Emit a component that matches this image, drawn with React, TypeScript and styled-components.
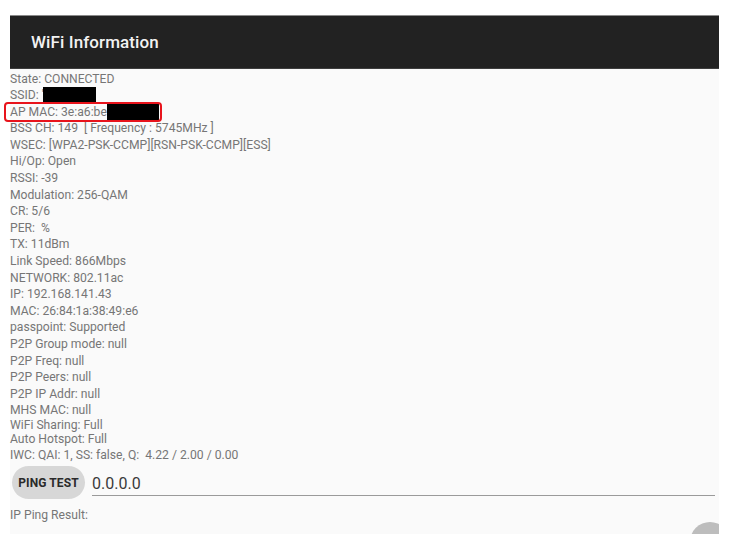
import React from "react";
import styled, { createGlobalStyle } from "styled-components";

const GlobalStyle = createGlobalStyle`
  html, body { margin: 0; padding: 0; background: #ffffff; }
  body { font-family: Roboto, "Noto Sans", "Liberation Sans", sans-serif; }
`;

const Page = styled.div`
  padding: 15px 24px 18px 10px;
  width: 743px;
  height: 552px;
  box-sizing: border-box;
`;

const Screen = styled.div`
  position: relative;
  width: 709px;
  height: 519px;
  background: #fafafa;
  display: flex;
  flex-direction: column;
`;

const Header = styled.header`
  height: 54px;
  box-sizing: border-box;
  background: #222222;
  border-top: 1px solid #8a8a8a;
  border-bottom: 1px solid #3e3e3e;
  display: flex;
  align-items: center;
  padding-left: 21px;
`;

const Title = styled.h1`
  margin: 0;
  font-size: 17px;
  font-weight: 500;
  color: #f2f2f2;
  letter-spacing: 0.1px;
`;

const Info = styled.div`
  display: flex;
  flex-direction: column;
  padding-top: 1.5px;
`;

const Line = styled.div<{ $h: number }>`
  font-size: 12.15px;
  color: #767676;
  line-height: ${(p) => p.$h}px;
  height: ${(p) => p.$h}px;
  white-space: pre;
  display: flex;
  align-items: center;
`;

const Highlight = styled.span`
  position: relative;
  display: flex;
  align-items: center;
  &::after {
    content: "";
    position: absolute;
    left: -6px;
    top: -1px;
    width: 158px;
    height: 20px;
    box-sizing: border-box;
    border: 2px solid #e8141c;
    border-radius: 4px;
  }
`;

const Redact = styled.span<{ $w: number; $hh: number; $ml?: number }>`
  display: inline-block;
  width: ${(p) => p.$w}px;
  height: ${(p) => p.$hh}px;
  background: #000;
  margin-left: ${(p) => p.$ml ?? 0}px;
`;

const PingRow = styled.div`
  display: flex;
  align-items: center;
  margin-top: 3px;
  padding-left: 2px;
  padding-right: 4px;
  gap: 7px;
`;

const PingButton = styled.button`
  height: 33px;
  width: 73px;
  border: none;
  border-radius: 17px;
  background: #d7d7d7;
  color: #2a2a2a;
  font-family: Roboto, "Liberation Sans", sans-serif;
  font-size: 12px;
  font-weight: 700;
  padding: 0;
  letter-spacing: 0.1px;
`;

const IpField = styled.div`
  flex: 1;
  height: 27px;
  box-sizing: border-box;
  border-bottom: 1.5px solid #9a9a9a;
  font-size: 16px;
  color: #3a3a3a;
  display: flex;
  align-items: center;
  padding-top: 2px;
`;

const Result = styled.div`
  font-size: 12.15px;
  color: #767676;
  margin-top: 8px;
  line-height: 16px;
`;

const FabClip = styled.div`
  position: absolute;
  right: 0;
  bottom: 0;
  width: 30px;
  height: 12px;
  overflow: hidden;
`;

const Fab = styled.div`
  position: absolute;
  left: 1px;
  top: 0;
  width: 40px;
  height: 40px;
  border-radius: 50%;
  background: #bdbdbd;
`;

const lines: [string, number][] = [["State: CONNECTED", 16.6]];

const rest: [string, number][] = [
  ["BSS CH: 149  [ Frequency : 5745MHz ]", 16.6],
  ["WSEC: [WPA2-PSK-CCMP][RSN-PSK-CCMP][ESS]", 16.6],
  ["Hi/Op: Open", 16.6],
  ["RSSI: -39", 16.6],
  ["Modulation: 256-QAM", 16.6],
  ["CR: 5/6", 16.6],
  ["PER:  %", 16.6],
  ["TX: 11dBm", 16.6],
  ["Link Speed: 866Mbps", 16.6],
  ["NETWORK: 802.11ac", 16.6],
  ["IP: 192.168.141.43", 16.6],
  ["MAC: 26:84:1a:38:49:e6", 16.6],
  ["passpoint: Supported", 16.6],
  ["P2P Group mode: null", 16.6],
  ["P2P Freq: null", 16.6],
  ["P2P Peers: null", 16.6],
  ["P2P IP Addr: null", 16.6],
  ["MHS MAC: null", 16],
  ["WiFi Sharing: Full", 14],
  ["Auto Hotspot: Full", 15],
  ["IWC: QAI: 1, SS: false, Q:  4.22 / 2.00 / 0.00", 16],
];

export default function App() {
  return (
    <>
      <GlobalStyle />
      <Page>
        <Screen>
          <Header>
            <Title>WiFi Information</Title>
          </Header>
          <Info>
            {lines.map(([t, h]) => (
              <Line key={t} $h={h}>{t}</Line>
            ))}
            <Line $h={16.6}>
              {"SSID: '"}
              <Redact $w={53} $hh={16} $ml={-1} />
            </Line>
            <Line $h={16.6}>
              <Highlight>
                {"AP MAC: 3e:a6:be:"}
                <Redact $w={52} $hh={18} $ml={-3} />
              </Highlight>
            </Line>
            {rest.map(([t, h]) => (
              <Line key={t} $h={h}>{t}</Line>
            ))}
          </Info>
          <PingRow>
            <PingButton>PING TEST</PingButton>
            <IpField>0.0.0.0</IpField>
          </PingRow>
          <Result>IP Ping Result:</Result>
          <FabClip>
            <Fab />
          </FabClip>
        </Screen>
      </Page>
    </>
  );
}
